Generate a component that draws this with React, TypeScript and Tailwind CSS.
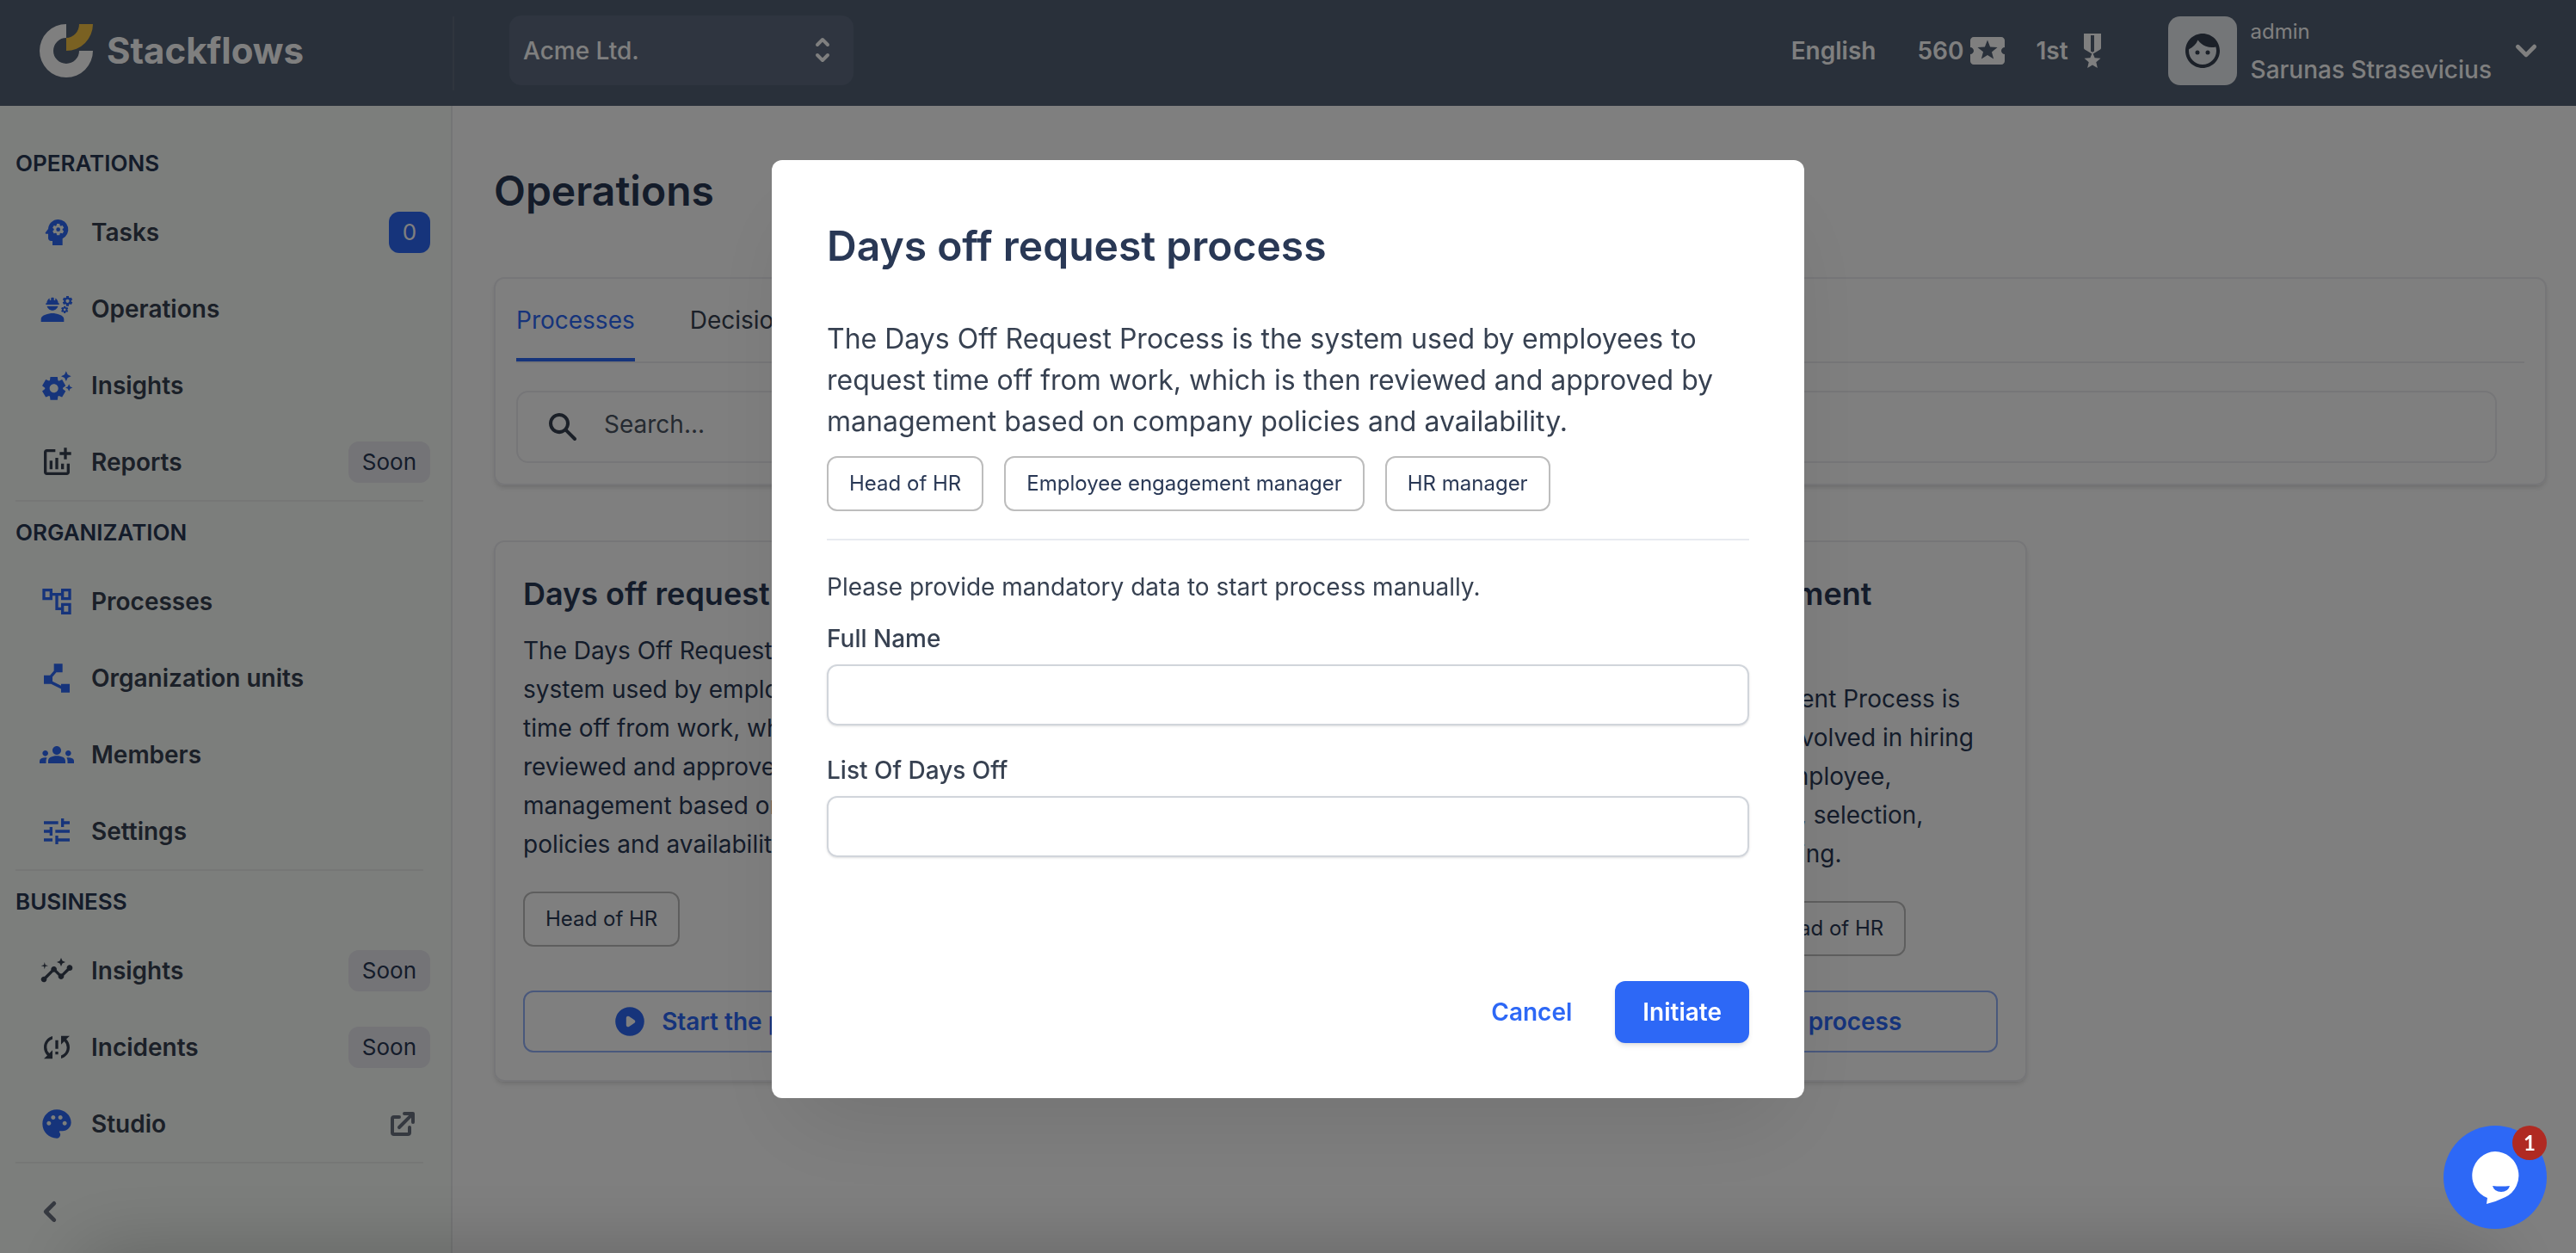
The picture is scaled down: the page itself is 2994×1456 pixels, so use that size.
import React from 'react';
import {
  MdAddchart,
  MdEngineering,
  MdFace,
  MdGroups,
  MdInsights,
  MdLocalActivity,
  MdMilitaryTech,
  MdOutlineAccountTree,
  MdPalette,
  MdPolyline,
  MdPsychology,
  MdSettingsSuggest,
  MdSyncProblem,
  MdTune,
} from 'react-icons/md';
import { HiChevronDown, HiChevronLeft, HiExternalLink, HiPlay, HiSearch, HiSelector } from 'react-icons/hi';
import type { IconType } from 'react-icons';

type NavItem = {
  label: string;
  icon: IconType;
  muted?: boolean;
  count?: number;
  soon?: boolean;
  external?: boolean;
};

type NavSection = { title: string; items: NavItem[] };

const sections: NavSection[] = [
  {
    title: 'OPERATIONS',
    items: [
      { label: 'Tasks', icon: MdPsychology, count: 0 },
      { label: 'Operations', icon: MdEngineering },
      { label: 'Insights', icon: MdSettingsSuggest },
      { label: 'Reports', icon: MdAddchart, muted: true, soon: true },
    ],
  },
  {
    title: 'ORGANIZATION',
    items: [
      { label: 'Processes', icon: MdOutlineAccountTree },
      { label: 'Organization units', icon: MdPolyline },
      { label: 'Members', icon: MdGroups },
      { label: 'Settings', icon: MdTune },
    ],
  },
  {
    title: 'BUSINESS',
    items: [
      { label: 'Insights', icon: MdInsights, muted: true, soon: true },
      { label: 'Incidents', icon: MdSyncProblem, muted: true, soon: true },
      { label: 'Studio', icon: MdPalette, external: true },
    ],
  },
];

const processes = [
  {
    title: 'Days off request process',
    description:
      'The Days Off Request Process is the system used by employees to request time off from work, which is then reviewed and approved by management based on company policies and availability.',
    roles: ['Head of HR'],
  },
  {
    title: 'Onboarding process',
    description:
      'The Onboarding Process is the set of steps used to welcome a new employee and prepare them for work.',
    roles: ['HR manager'],
  },
  {
    title: 'Workers recruitment process',
    description:
      'The People Recruitment Process is the series of steps involved in hiring the most qualified employee, including advertising, selection, onboarding and training.',
    roles: ['HR manager', 'Head of HR'],
  },
];

const Logo = () => (
  <a href="#" className="mb-1.5 flex items-center gap-4 text-white">
    <svg viewBox="0 0 62 62" className="h-[62px] w-[62px]" aria-hidden="true">
      <path d="M31 0A31 31 0 1 0 62 31H46A15 15 0 1 1 31 16Z" fill="#ffffff" />
      <path d="M46 0H62A31 31 0 0 1 31 31V16A15 16 0 0 0 46 0Z" fill="#f5c344" />
    </svg>
    <span className="text-[42px] font-bold">Stackflows</span>
  </a>
);

const Header = () => (
  <header className="flex h-[123px] items-center bg-[#526074] text-white">
    <div className="flex h-[86px] w-[528px] shrink-0 items-center border-r-2 border-[#5e6a7c] pl-[46px]">
      <Logo />
    </div>
    <div className="relative mb-1.5 ml-16">
      <select
        aria-label="Company"
        className="h-[81px] w-[400px] appearance-none rounded-[14px] bg-[#5e6b80] pl-4 text-[28px] font-medium"
      >
        <option>Acme Ltd.</option>
      </select>
      <HiSelector className="pointer-events-none absolute right-4 top-5 size-10" />
    </div>
    <div className="mb-1.5 ml-auto flex items-center pr-[34px] text-[28px] font-semibold">
      <button className="mr-12">English</button>
      <span className="mr-8 flex items-center gap-1">
        560
        <MdLocalActivity className="size-12" />
      </span>
      <span className="mr-16 flex items-center gap-1">
        1st
        <MdMilitaryTech className="size-12" />
      </span>
      <button className="flex items-center font-medium">
        <span className="mr-4 flex size-20 items-center justify-center rounded-[14px] bg-[#e8ecf0] text-[#374151]">
          <MdFace className="size-12" />
        </span>
        <span className="mr-4 flex flex-col gap-1 text-left">
          <span className="text-2xl leading-10 font-normal">admin</span>
          <span className="leading-10">Sarunas Strasevicius</span>
        </span>
        <HiChevronDown className="size-12" />
      </button>
    </div>
  </header>
);

const NavRow = ({ item }: { item: NavItem }) => {
  const Icon = item.icon;
  return (
    <a href="#" className="flex h-[89px] items-center pr-6 pl-[46px] text-[28px] font-semibold text-[#374151]">
      <Icon className={item.muted ? 'mr-5 size-10' : 'mr-5 size-10 text-[#2d68f6]'} />
      <span className="flex-1">{item.label}</span>
      {item.count !== undefined && (
        <span className="flex size-12 items-center justify-center rounded-xl bg-[#2d68f6] text-[26px] font-normal text-white">
          {item.count}
        </span>
      )}
      {item.soon && (
        <span className="flex h-12 items-center rounded-xl bg-[#e8e8ee] px-4 text-[26px] font-normal text-[#293855]">
          Soon
        </span>
      )}
      {item.external && <HiExternalLink className="mr-3 size-10 text-[#6b7280]" />}
    </a>
  );
};

const Sidebar = () => (
  <aside className="w-[526px] shrink-0 border-r-2 border-[#e9ebec] bg-[#f9fcf9] pt-[31px]">
    <nav>
      {sections.map((section) => (
        <div key={section.title}>
          <h2 className="flex h-[71px] items-center pl-[18px] text-[26px] font-semibold text-[#293855]">
            {section.title}
          </h2>
          {section.items.map((item) => (
            <NavRow key={item.label} item={item} />
          ))}
          <hr className="mr-8 ml-[18px] border-t-2 border-[#eceeec]" />
        </div>
      ))}
    </nav>
    <button aria-label="Collapse menu" className="mt-8 ml-[34px] text-[#6b7280]">
      <HiChevronLeft className="size-12" />
    </button>
  </aside>
);

const RoleTag = ({ label }: { label: string }) => (
  <span className="flex h-16 items-center rounded-xl border-2 border-[#bdbdbd] px-6 text-2xl text-[#293855]">
    {label}
  </span>
);

const ProcessCard = ({ process }: { process: (typeof processes)[number] }) => (
  <article className="flex flex-col rounded-xl border-2 border-[#ececf0] p-8 shadow-md">
    <h3 className="text-4xl leading-[56px] font-semibold text-[#293855]">{process.title}</h3>
    <p className="mt-4 text-[28px] leading-[45px] text-[#293855]">{process.description}</p>
    <div className="mt-8 mb-10 flex gap-6">
      {process.roles.map((role) => (
        <RoleTag key={role} label={role} />
      ))}
    </div>
    <button className="mt-auto flex h-[72px] items-center justify-center gap-4 rounded-xl border-2 border-[#93b0f8] pr-2 text-[28px] font-semibold text-[#2d68f6]">
      <HiPlay className="size-[42px]" />
      Start the process
    </button>
  </article>
);

const Field = ({ id, label }: { id: string; label: string }) => (
  <div className="flex flex-col">
    <label htmlFor={id} className="text-[28px] leading-10 font-medium">
      {label}
    </label>
    <input
      id={id}
      type="text"
      className="mt-2.5 h-[71px] rounded-xl border-2 border-[#d1d5db] px-6 text-[28px] shadow-sm outline-none"
    />
  </div>
);

const InitiateDialog = () => (
  <div className="fixed inset-0 flex items-start justify-center bg-black/50 pt-[186px]">
    <form
      role="dialog"
      aria-modal="true"
      aria-labelledby="dialog-title"
      className="w-[1200px] rounded-xl bg-white p-16 text-[#374151] shadow-[0_50px_100px_-24px_rgba(0,0,0,0.1)]"
    >
      <h2 id="dialog-title" className="text-5xl leading-[72px] font-semibold text-[#293855]">
        Days off request process
      </h2>
      <p className="mt-12 text-[32px] leading-[48px]">
        The Days Off Request Process is the system used by employees to request time off from work, which is then
        reviewed and approved by management based on company policies and availability.
      </p>
      <div className="mt-4 flex gap-6">
        <RoleTag label="Head of HR" />
        <RoleTag label="Employee engagement manager" />
        <RoleTag label="HR manager" />
      </div>
      <hr className="my-8 border-t-2 border-[#e8eaf0]" />
      <p className="mb-[18px] text-[28px] leading-[44px]">Please provide mandatory data to start process manually.</p>
      <div className="flex flex-col gap-8">
        <Field id="full-name" label="Full Name" />
        <Field id="days-off" label="List Of Days Off" />
      </div>
      <div className="mt-36 flex justify-end gap-[18px] text-[28px] font-semibold">
        <button type="button" className="h-[72px] px-8 text-[#2d68f6]">
          Cancel
        </button>
        <button type="submit" className="h-[72px] rounded-xl bg-[#2d68f6] px-8 text-white shadow-md">
          Initiate
        </button>
      </div>
    </form>
    {/* soft shade along the bottom edge of the window */}
    <div className="pointer-events-none absolute inset-x-24 top-full h-40 shadow-[0_0_90px_rgba(0,0,0,0.22)]" />
  </div>
);

const ChatButton = () => (
  <button
    aria-label="Open chat, 1 unread message"
    className="fixed right-[34px] bottom-7 flex size-[120px] items-center justify-center rounded-full bg-[#2d68f6]"
  >
    <svg viewBox="0 0 56 61" className="h-[61px] w-14" aria-hidden="true">
      <path d="M28 0A28 28 0 0 1 40 53Q30 58 18 61L19 54A28 28 0 0 1 28 0Z" fill="#ffffff" />
      <path d="M25 40Q35 41 45 40Q43 47 35 47Q27 47 25 40Z" fill="#2d68f6" />
    </svg>
    <span className="absolute top-0 right-0 flex size-10 items-center justify-center rounded-full bg-[#b02a22] font-['Lato',sans-serif] text-2xl font-bold text-white">
      1
    </span>
  </button>
);

const App = () => {
  return (
    <div className="flex min-h-screen flex-col bg-white font-['Inter',sans-serif]">
      <Header />
      <div className="flex flex-1">
        <Sidebar />
        <main className="flex-1 pt-[63px] pr-[34px] pl-12">
          <h1 className="text-5xl leading-[72px] font-semibold text-[#293855]">Operations</h1>
          <section className="mt-16 rounded-xl border-2 border-[#ececf0] px-6 pb-6 shadow-md">
            <div className="flex gap-16 border-b-2 border-[#ececf0] text-[28px]">
              <button className="h-24 border-b-4 border-[#2d68f6] pt-1 text-[#2d68f6]">Processes</button>
              <button className="h-24 border-b-4 border-transparent pt-1 text-[#374151]">Decisions</button>
            </div>
            <label className="mt-8 mr-8 flex h-[84px] items-center rounded-[14px] border-2 border-[#ececf0] pl-8 text-[#374151]">
              <HiSearch className="size-10" />
              <input
                type="search"
                placeholder="Search..."
                className="ml-7 flex-1 pb-1.5 text-[28px] outline-none placeholder:text-[#4b5563]"
              />
            </label>
          </section>
          <div className="mt-16 grid grid-cols-4 gap-8">
            {processes.map((process) => (
              <ProcessCard key={process.title} process={process} />
            ))}
          </div>
        </main>
      </div>
      <InitiateDialog />
      <ChatButton />
    </div>
  );
};

export default App;
